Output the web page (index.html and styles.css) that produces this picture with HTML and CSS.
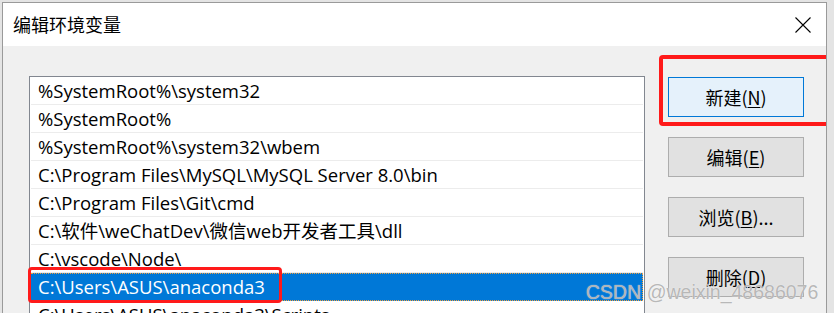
FILE: index.html
```html
<!DOCTYPE HTML>
<html>
<head>
    <meta charset="utf-8">
    <title>编辑环境变量</title>
    <link rel="stylesheet" href="styles.css">
</head>
<body>
    <div class="dialog">
        <div class="titlebar">
            <span class="title">编辑环境变量</span>
            <span class="close">
                <svg width="16" height="16" viewBox="0 0 16 16"><path d="M0.5 0.5 L15.5 15.5 M15.5 0.5 L0.5 15.5" stroke="#000" stroke-width="1.1" fill="none"/></svg>
            </span>
        </div>
        <div class="body">
            <div class="list">
                <div class="row">%SystemRoot%\system32</div>
                <div class="row">%SystemRoot%</div>
                <div class="row">%SystemRoot%\system32\wbem</div>
                <div class="row">C:\Program Files\MySQL\MySQL Server 8.0\bin</div>
                <div class="row">C:\Program Files\Git\cmd</div>
                <div class="row">C:\软件\weChatDev\微信web开发者工具\dll</div>
                <div class="row">C:\vscode\Node\</div>
                <div class="row selected">C:\Users\ASUS\anaconda3</div>
                <div class="row">C:\Users\ASUS\anaconda3\Scripts</div>
            </div>
            <div class="buttons">
                <div class="btn default">新建(<u>N</u>)</div>
                <div class="btn">编辑(<u>E</u>)</div>
                <div class="btn">浏览(<u>B</u>)...</div>
                <div class="btn">删除(<u>D</u>)</div>
            </div>
            <!-- 红框标注 -->
            <div class="mark-box mark-new"></div>
            <div class="mark-box mark-row"></div>
        </div>
    </div>
    <div class="watermark">CSDN @weixin_48686076</div>
</body>
</html>
```

FILE: styles.css
```css
html, body{
    margin:0;
    width:834px;
    height:313px;
    overflow:hidden;
}
body{
    position:relative;
    background-color:#e4e4e4;
    padding:2px 0 0 2px;
    box-sizing:border-box;
    font-family:"Noto Sans CJK SC", sans-serif;
}
.dialog{
    width:825px;
    height:311px;
    border:1px solid #9a9a9a;
    border-bottom:none;
    box-sizing:border-box;
    background-color:#f0f0f0;
    overflow:hidden;
}
.titlebar{
    height:43px;
    background-color:#ffffff;
    display:flex;
    align-items:center;
    justify-content:space-between;
    padding:0 15px 0 10px;
}
.title{
    font-size:18px;
    color:#000;
    margin-top:-2px;
}
.close{
    display:flex;
    margin-top:1px;
}
.body{
    position:relative;
    display:flex;
    padding:30px 0 0 26px;
}
.list{
    width:616px;
    height:260px;
    background-color:#ffffff;
    border:1px solid #828790;
    box-sizing:border-box;
    overflow:hidden;
}
.row{
    height:28px;
    line-height:27px;
    border-bottom:1px solid #ececec;
    box-sizing:border-box;
    padding-left:7px;
    margin:0 1px;
    font-family:"Open Sans", "Noto Sans CJK SC", sans-serif;
    font-size:18.5px;
    color:#000;
    white-space:nowrap;
}
.row.selected{
    background-color:#0078d7;
    color:#ffffff;
    border:1px dotted #f0a040;
    border-left:none;
    line-height:26px;
    padding-left:7px;
}
.buttons{
    display:flex;
    flex-direction:column;
    gap:20px;
    margin:1px 0 0 23px;
}
.btn{
    width:136px;
    height:40px;
    box-sizing:border-box;
    border:1px solid #adadad;
    background-color:#e1e1e1;
    display:flex;
    align-items:center;
    justify-content:center;
    font-size:18px;
    color:#000;
}
.btn.default{
    border-color:#0078d7;
    background-color:#e5f1fb;
}
.btn u{
    text-underline-offset:2px;
}
.mark-box{
    position:absolute;
    border:3px solid #ff1a1a;
    border-radius:4px;
    box-sizing:border-box;
}
.mark-new{
    left:656px;
    top:9px;
    width:172px;
    height:71px;
    border-width:4px;
}
.mark-row{
    left:25px;
    top:221px;
    width:254px;
    height:36px;
}
.watermark{
    position:absolute;
    left:586px;
    top:281px;
    font-family:"Liberation Sans", sans-serif;
    font-size:19.5px;
    color:rgba(165,165,165,0.8);
    text-shadow:0 0 1px #ffffff;
    white-space:nowrap;
}
```
